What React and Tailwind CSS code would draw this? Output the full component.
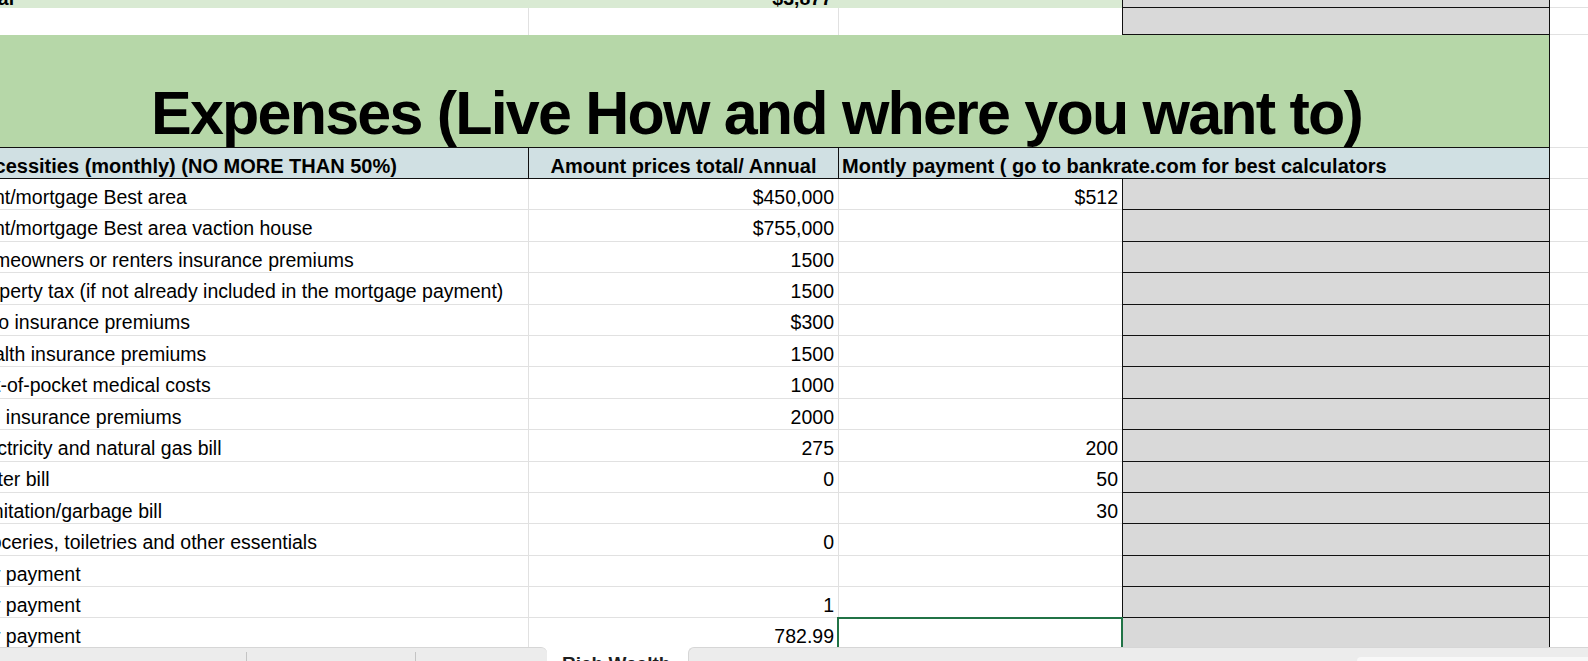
import React from 'react';

const rows = [
  ['Rent/mortgage Best area', '$450,000', '$512'],
  ['Rent/mortgage Best area vaction house', '$755,000', ''],
  ['Homeowners or renters insurance premiums', '1500', ''],
  ['Property tax (if not already included in the mortgage payment)', '1500', ''],
  ['Auto insurance premiums', '$300', ''],
  ['Health insurance premiums', '1500', ''],
  ['Out-of-pocket medical costs', '1000', ''],
  ['Life insurance premiums', '2000', ''],
  ['Electricity and natural gas bill', '275', '200'],
  ['Water bill', '0', '50'],
  ['Sanitation/garbage bill', '', '30'],
  ['Groceries, toiletries and other essentials', '0', ''],
  ['Car payment', '', ''],
  ['Car payment', '1', ''],
  ['Car payment', '782.99', ''],
];

function DataRow({ label, annual, monthly, selected }) {
  return (
    <div className="flex h-[31.4px] text-[19.5px] leading-none">
      <div className="w-[565px] shrink-0 flex items-end pl-[5px] pb-[2px] border-r border-b border-[#e1e1e1] whitespace-nowrap overflow-hidden">
        {label}
      </div>
      <div className="w-[310px] shrink-0 flex items-end justify-end pr-[4px] pb-[2px] border-r border-b border-[#e1e1e1]">
        {annual}
      </div>
      <div className="relative w-[283px] shrink-0 flex items-end justify-end pr-[4px] pb-[2px] border-b border-[#e1e1e1]">
        {monthly}
        {selected && (
          <div className="absolute -left-[2px] -top-[1px] -right-[1px] -bottom-[1px] border-2 border-[#217346]" />
        )}
      </div>
      <div className="w-[428px] shrink-0 bg-[#d9d9d9] border-x border-b border-[#111]" />
      <div className="w-[200px] shrink-0 border-b border-[#e1e1e1]" />
    </div>
  );
}

function TabBar() {
  return (
    <div className="h-[14px] flex bg-white overflow-hidden">
      {/* inactive tabs */}
      <div className="w-[547px] shrink-0 flex items-end bg-[#ececec] border-t border-[#d6d6d6] rounded-tr-[6px]">
        <div className="w-[246px] h-full" />
        <div className="w-px h-[9px] bg-[#c4c4c4]" />
        <div className="w-[168px] h-full" />
        <div className="w-px h-[9px] bg-[#c4c4c4]" />
      </div>
      {/* active sheet */}
      <div className="w-[141px] shrink-0 pl-[15px] pt-[7px] text-[19px] font-bold leading-none text-[#1f1f1f] whitespace-nowrap">
        Rich Wealth
      </div>
      <div className="flex-1 flex bg-[#ececec] border-t border-l border-[#d6d6d6] rounded-tl-[6px] pl-[668px] pt-[9px]">
        <div className="flex-1 bg-[#f8f8f8] rounded-tl-[5px]" />
      </div>
    </div>
  );
}

export default function App() {
  return (
    <div className="w-[1588px] h-[661px] overflow-hidden bg-white flex flex-col font-['Liberation_Sans',Arial,sans-serif] text-black">
      <div className="h-[647px] shrink-0 overflow-hidden">
        <div className="-mt-[23px] -ml-[36px] w-[1800px]">
          {/* total row */}
          <div className="flex h-[31px] text-[19.5px] font-bold leading-none">
            <div className="w-[565px] shrink-0 flex items-end pl-[5px] bg-[#d9ead3]">Total</div>
            <div className="w-[310px] shrink-0 flex items-end justify-end pr-[7px] bg-[#d9ead3]">$3,877</div>
            <div className="w-[283px] shrink-0 bg-[#d9ead3]" />
            <div className="w-[428px] shrink-0 bg-[#d9d9d9] border-x border-b border-[#111]" />
            <div className="w-[200px] shrink-0 border-b border-[#e1e1e1]" />
          </div>

          {/* blank row */}
          <div className="flex h-[27px]">
            <div className="w-[565px] shrink-0 border-r border-[#e1e1e1]" />
            <div className="w-[310px] shrink-0 border-r border-[#e1e1e1]" />
            <div className="w-[283px] shrink-0" />
            <div className="w-[428px] shrink-0 bg-[#d9d9d9] border-x border-b border-[#111]" />
            <div className="w-[200px] shrink-0 border-b border-[#e1e1e1]" />
          </div>

          {/* title */}
          <div className="flex h-[113px]">
            <div className="w-[1586px] shrink-0 flex items-end justify-center pb-[3px] bg-[#b6d7a8] border-r border-b border-[#111]">
              <h1 className="text-[61px] font-bold leading-none tracking-[-1.8px] whitespace-nowrap">
                Expenses (Live How and where you want to)
              </h1>
            </div>
            <div className="w-[200px] shrink-0 border-b border-[#e1e1e1]" />
          </div>

          {/* column headers */}
          <div className="flex h-[31px] text-[20px] font-bold leading-none">
            <div className="w-[565px] shrink-0 flex items-end pl-[5px] pb-[2px] bg-[#d0e0e3] border-r border-b border-[#111] whitespace-nowrap">
              Necessities (monthly) (NO MORE THAN 50%)
            </div>
            <div className="w-[310px] shrink-0 flex items-end justify-center pb-[2px] bg-[#d0e0e3] border-r border-b border-[#111] whitespace-nowrap">
              Amount prices total/ Annual
            </div>
            <div className="w-[711px] shrink-0 flex items-end pl-[3px] pb-[2px] bg-[#d0e0e3] border-r border-b border-[#111] whitespace-nowrap">
              Montly payment ( go to bankrate.com for best calculators
            </div>
            <div className="w-[200px] shrink-0 border-b border-[#e1e1e1]" />
          </div>

          {rows.map(([label, annual, monthly], i) => (
            <DataRow
              key={i}
              label={label}
              annual={annual}
              monthly={monthly}
              selected={i === rows.length - 1}
            />
          ))}
        </div>
      </div>
      <TabBar />
    </div>
  );
}
